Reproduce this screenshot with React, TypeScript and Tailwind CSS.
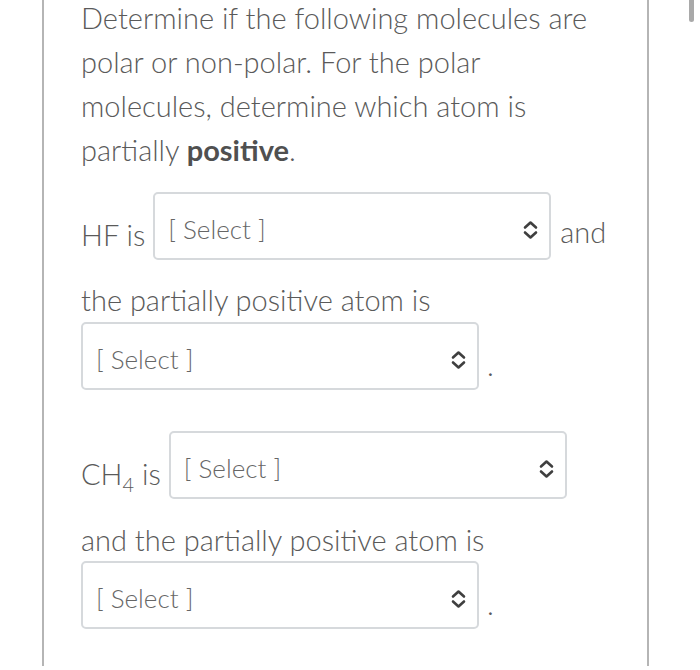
import React from 'react';

const Chevrons: React.FC = () => (
  <svg width="17" height="20" viewBox="0 0 17 20" fill="none" stroke="#3f3f3f" strokeWidth="2.6" strokeLinecap="round" strokeLinejoin="round">
    <path d="M3 7.5 L8.5 2.5 L14 7.5" />
    <path d="M3 12.5 L8.5 17.5 L14 12.5" />
  </svg>
);

const Select: React.FC = () => (
  <div className="w-[398px] h-[68px] shrink-0 rounded-[5px] border-2 border-[#d6d9dc] bg-white flex items-start justify-between pl-[13px] pr-[10px] pt-[21px]">
    <span className="text-[26px] leading-[28px] font-light text-[#666]">[ Select ]</span>
    <span className="mt-[5px]"><Chevrons /></span>
  </div>
);

const App: React.FC = () => (
  <div className="w-[700px] h-[670px] bg-white overflow-hidden relative font-['Lato','Open_Sans',sans-serif] font-light text-[#5a5a5a]">
    <div className="absolute right-[6px] top-0 w-[5px] h-[22px] rounded-b-full bg-[#a9a9a9]" />
    <div className="ml-[42px] w-[607px] h-[670px] border-x-2 border-[#b5b5b5] pl-[37px] pr-2">
      <p className="text-[29px] leading-[44px] -mt-[4px] whitespace-nowrap">
        Determine if the following molecules are
        <br />
        polar or non-polar. For the polar
        <br />
        molecules, determine which atom is
        <br />
        partially <b className="font-bold text-[#505050]">positive</b>.
      </p>

      <div className="flex items-start mt-[20px] text-[29px]">
        <span className="pt-[29px] leading-[28px] mr-[8px]">HF is</span>
        <Select />
        <span className="pt-[26px] leading-[28px] ml-[9px]">and</span>
      </div>

      <div className="text-[29px] leading-[28px] mt-[26px]">the partially positive atom is</div>

      <div className="flex items-start mt-[8px] text-[29px]">
        <Select />
        <span className="pt-[29px] leading-[28px] ml-[8px]">.</span>
      </div>

      <div className="flex items-start mt-[41px] text-[29px]">
        <span className="pt-[29px] leading-[28px] mr-[8px] whitespace-nowrap">
          CH<span className="text-[20px] relative top-[7px]">4</span> is
        </span>
        <Select />
      </div>

      <div className="text-[29px] leading-[28px] mt-[27px]">and the partially positive atom is</div>

      <div className="flex items-start mt-[7px] text-[29px]">
        <Select />
        <span className="pt-[29px] leading-[28px] ml-[8px]">.</span>
      </div>
    </div>
  </div>
);

export default App;
